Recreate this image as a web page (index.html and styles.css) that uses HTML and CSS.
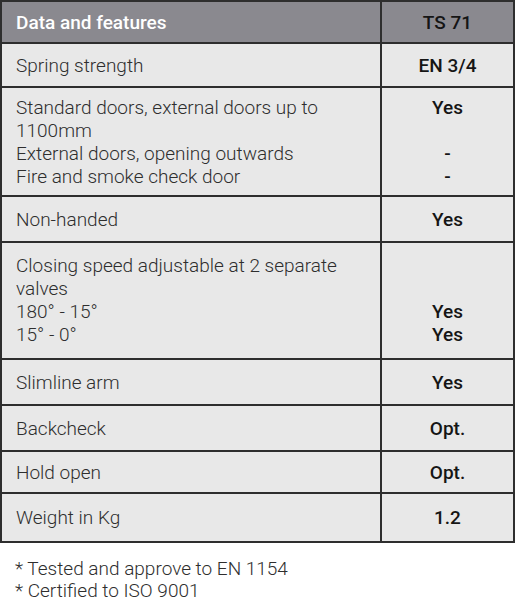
FILE: index.html
```html
<!DOCTYPE html>
<html lang="en">
<head>
<meta charset="utf-8">
<title>TS 71 – Data and features</title>
<link rel="stylesheet" href="styles.css">
</head>
<body>
<table class="spec">
  <thead>
    <tr>
      <th class="label">Data and features</th>
      <th class="value">TS 71</th>
    </tr>
  </thead>
  <tbody>
    <tr class="row">
      <td class="label">Spring strength</td>
      <td class="value">EN 3/4</td>
    </tr>
    <tr class="row multi">
      <td class="label">Standard doors, external doors up to<br>1100mm<br>External doors, opening outwards<br>Fire and smoke check door</td>
      <td class="value">Yes<br>&nbsp;<br>-<br>-</td>
    </tr>
    <tr class="row">
      <td class="label">Non-handed</td>
      <td class="value">Yes</td>
    </tr>
    <tr class="row multi tall">
      <td class="label">Closing speed adjustable at 2 separate<br>valves<br>180° - 15°<br>15° - 0°</td>
      <td class="value">&nbsp;<br>&nbsp;<br>Yes<br>Yes</td>
    </tr>
    <tr class="row">
      <td class="label">Slimline arm</td>
      <td class="value">Yes</td>
    </tr>
    <tr class="row">
      <td class="label">Backcheck</td>
      <td class="value">Opt.</td>
    </tr>
    <tr class="row short">
      <td class="label">Hold open</td>
      <td class="value">Opt.</td>
    </tr>
    <tr class="row">
      <td class="label">Weight in Kg</td>
      <td class="value">1.2</td>
    </tr>
  </tbody>
</table>
<div class="notes">
  <p>* Tested and approve to EN 1154</p>
  <p>* Certified to ISO 9001</p>
</div>
</body>
</html>
```

FILE: styles.css
```css
html, body {
  margin: 0;
  padding: 0;
  background: #ffffff;
}

body {
  font-family: Roboto, "Liberation Sans", sans-serif;
  font-size: 19px;
  color: #2e2e2e;
}

.spec {
  width: 515px;
  border-collapse: collapse;
  table-layout: fixed;
}

.spec th,
.spec td {
  border: 2px solid #2e2e2e;
  padding: 0 14px;
  line-height: 23px;
}

.spec .label {
  width: 350px;
  text-align: left;
}

.spec .value {
  text-align: center;
  font-weight: 500;
  color: #151515;
}

.spec thead th {
  height: 40px;
  background: #8a898f;
  color: #ffffff;
  font-weight: 500;
}

.spec tbody td {
  background: #e8e8e8;
  height: 44px;
  vertical-align: middle;
}

.spec tbody tr:first-child td {
  height: 42px;
}

.spec .short td {
  height: 40px;
}

.spec tbody tr:last-child td {
  height: 47px;
}

.spec tbody .label {
  font-weight: 300;
}

.spec .multi td {
  vertical-align: top;
  padding-top: 8px;
  padding-bottom: 7px;
}

.spec .tall td {
  padding-top: 11px;
  padding-bottom: 12px;
}

.notes {
  padding: 15px 15px 0;
  color: #2e2e2e;
  font-weight: 300;
}

.notes p {
  margin: 0;
  line-height: 22px;
}
```
